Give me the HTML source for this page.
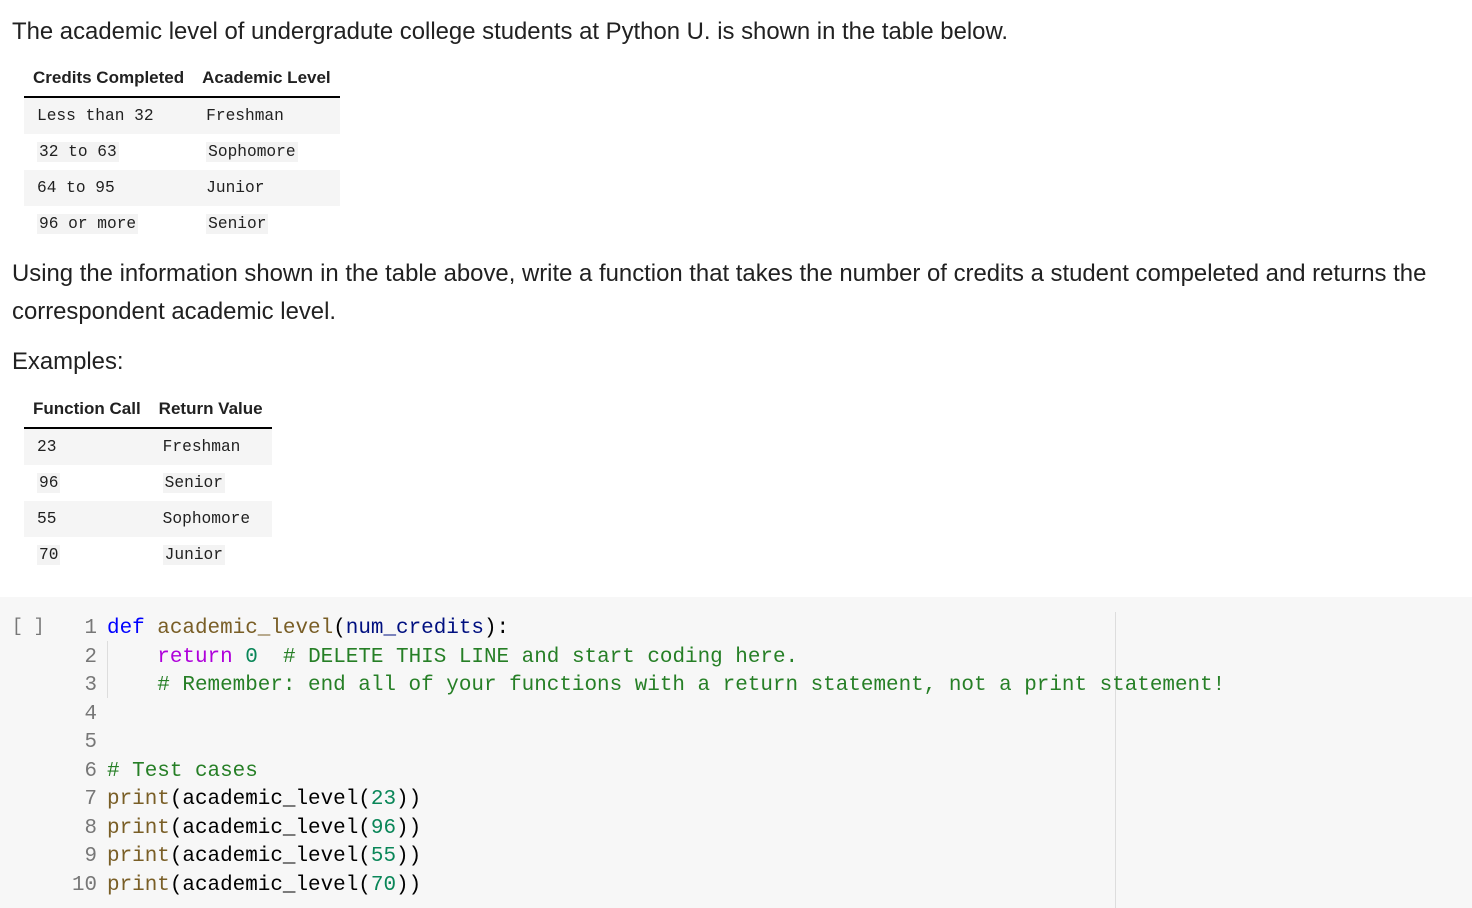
<!DOCTYPE html>
<html><head><style>
body{margin:0;width:1472px;height:908px;background:#fff;font-family:"Liberation Sans",sans-serif;color:#212121;overflow:hidden;position:relative}
.p{position:absolute;left:12px;font-size:23.9px;margin:0;white-space:nowrap}
table{position:absolute;left:24px;border-collapse:collapse}
th{font-size:17px;font-weight:bold;text-align:left;padding:0 9px;height:36px;border-bottom:2px solid #000}
td{font-family:"Liberation Mono",monospace;font-size:16.2px;height:36px;padding:0 13px}
tr.g td{background:#f5f5f5}
td span{background:#f3f3f3;padding:1px 2px}
.code{position:absolute;left:0;top:597px;width:1472px;height:311px;background:#f7f7f7}
.ln{position:absolute;left:60px;width:37px;text-align:right;font-family:"Liberation Mono",monospace;font-size:20.8px;color:#777}
.cl{position:absolute;left:107px;font-family:"Liberation Mono",monospace;font-size:20.95px;white-space:pre;color:#000}
.k{color:#0000ff}.f{color:#795e26}.v{color:#001080}.r{color:#af00db}.c{color:#267f26}.n{color:#098658}
</style></head><body>
<p class="p" style="top:18px">The academic level of undergradute college students at Python U. is shown in the table below.</p>
<table style="top:60px"><tr><th>Credits Completed</th><th>Academic Level</th></tr>
<tr class="g"><td>Less than 32</td><td>Freshman</td></tr>
<tr><td><span>32 to 63</span></td><td><span>Sophomore</span></td></tr>
<tr class="g"><td>64 to 95</td><td>Junior</td></tr>
<tr><td><span>96 or more</span></td><td><span>Senior</span></td></tr></table>
<p class="p" style="top:260px">Using the information shown in the table above, write a function that takes the number of credits a student compeleted and returns the</p>
<p class="p" style="top:298px">correspondent academic level.</p>
<p class="p" style="top:348px">Examples:</p>
<table style="top:391px"><tr><th>Function Call</th><th>Return Value</th></tr>
<tr class="g"><td>23</td><td>Freshman</td></tr>
<tr><td><span>96</span></td><td><span>Senior</span></td></tr>
<tr class="g"><td>55</td><td>Sophomore</td></tr>
<tr><td><span>70</span></td><td><span>Junior</span></td></tr></table>
<div class="code">
<div style="position:absolute;left:12px;top:20px;font-family:'Liberation Mono',monospace;font-size:18px;color:#777">[ ]</div>
<div style="position:absolute;left:1115px;top:15px;width:1px;height:296px;background:#ddd"></div>
<div style="position:absolute;left:107px;top:44px;width:1px;height:57px;background:#ddd"></div>
</div>
<div class="ln" style="top:617px">1</div><div class="cl" style="top:617px"><span class="k">def</span> <span class="f">academic_level</span>(<span class="v">num_credits</span>):</div>
<div class="ln" style="top:646px">2</div><div class="cl" style="top:646px">    <span class="r">return</span> <span class="n">0</span>  <span class="c"># DELETE THIS LINE and start coding here.</span></div>
<div class="ln" style="top:674px">3</div><div class="cl" style="top:674px">    <span class="c"># Remember: end all of your functions with a return statement, not a print statement!</span></div>
<div class="ln" style="top:703px">4</div>
<div class="ln" style="top:731px">5</div>
<div class="ln" style="top:760px">6</div><div class="cl" style="top:760px"><span class="c"># Test cases</span></div>
<div class="ln" style="top:788px">7</div><div class="cl" style="top:788px"><span class="f">print</span>(academic_level(<span class="n">23</span>))</div>
<div class="ln" style="top:817px">8</div><div class="cl" style="top:817px"><span class="f">print</span>(academic_level(<span class="n">96</span>))</div>
<div class="ln" style="top:845px">9</div><div class="cl" style="top:845px"><span class="f">print</span>(academic_level(<span class="n">55</span>))</div>
<div class="ln" style="top:874px">10</div><div class="cl" style="top:874px"><span class="f">print</span>(academic_level(<span class="n">70</span>))</div>
</body></html>
